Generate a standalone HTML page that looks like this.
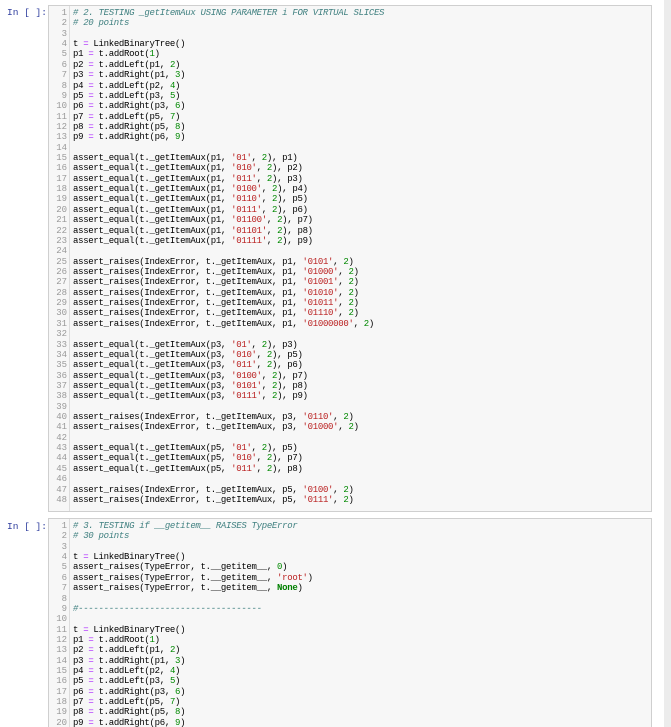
<!DOCTYPE html>
<html style="overflow:hidden"><head><meta charset="utf-8"><style>
html,body{margin:0;overflow:hidden}
body{background:#fff;width:671px;height:727px;position:relative;font-family:"Liberation Mono",monospace}
.sb{position:absolute;left:664px;top:0;width:7px;height:727px;background:#ececec}
.prompt{position:absolute;left:7px;font-size:9.5px;color:#303F9F;font-family:"Liberation Mono",monospace}
.cell{position:absolute;left:48px;width:602px;background:#f7f7f7;border:1px solid #cfcfcf;overflow:hidden}
.gut{position:absolute;left:0;top:0;bottom:0;width:20px;border-right:1px solid #ddd;background:#f7f7f7}
pre{margin:0;font-family:"Liberation Mono",monospace;font-size:9px;letter-spacing:-0.3px;line-height:10.36px;color:#000;position:absolute;top:2px}
.ln{left:0;width:18px;text-align:right;color:#999;letter-spacing:0}
.code{left:24px}
.c{color:#408080;font-style:italic}.n{color:#080}.s{color:#BA2121}.o{color:#A2F}.k{color:#008000;font-weight:bold}
</style></head><body>
<div class="sb"></div>
<div class="prompt" style="top:7px">In [ ]:</div>
<div class="cell" style="top:5px;height:505px"><div class="gut"></div>
<pre class="ln">1
2
3
4
5
6
7
8
9
10
11
12
13
14
15
16
17
18
19
20
21
22
23
24
25
26
27
28
29
30
31
32
33
34
35
36
37
38
39
40
41
42
43
44
45
46
47
48</pre>
<pre class="code"><span class="c"># 2. TESTING _getItemAux USING PARAMETER i FOR VIRTUAL SLICES</span>
<span class="c"># 20 points</span>

t <span class="o">=</span> LinkedBinaryTree()
p1 <span class="o">=</span> t.addRoot(<span class="n">1</span>)
p2 <span class="o">=</span> t.addLeft(p1, <span class="n">2</span>)
p3 <span class="o">=</span> t.addRight(p1, <span class="n">3</span>)
p4 <span class="o">=</span> t.addLeft(p2, <span class="n">4</span>)
p5 <span class="o">=</span> t.addLeft(p3, <span class="n">5</span>)
p6 <span class="o">=</span> t.addRight(p3, <span class="n">6</span>)
p7 <span class="o">=</span> t.addLeft(p5, <span class="n">7</span>)
p8 <span class="o">=</span> t.addRight(p5, <span class="n">8</span>)
p9 <span class="o">=</span> t.addRight(p6, <span class="n">9</span>)

assert_equal(t._getItemAux(p1, <span class="s">'01'</span>, <span class="n">2</span>), p1)
assert_equal(t._getItemAux(p1, <span class="s">'010'</span>, <span class="n">2</span>), p2)
assert_equal(t._getItemAux(p1, <span class="s">'011'</span>, <span class="n">2</span>), p3)
assert_equal(t._getItemAux(p1, <span class="s">'0100'</span>, <span class="n">2</span>), p4)
assert_equal(t._getItemAux(p1, <span class="s">'0110'</span>, <span class="n">2</span>), p5)
assert_equal(t._getItemAux(p1, <span class="s">'0111'</span>, <span class="n">2</span>), p6)
assert_equal(t._getItemAux(p1, <span class="s">'01100'</span>, <span class="n">2</span>), p7)
assert_equal(t._getItemAux(p1, <span class="s">'01101'</span>, <span class="n">2</span>), p8)
assert_equal(t._getItemAux(p1, <span class="s">'01111'</span>, <span class="n">2</span>), p9)

assert_raises(IndexError, t._getItemAux, p1, <span class="s">'0101'</span>, <span class="n">2</span>)
assert_raises(IndexError, t._getItemAux, p1, <span class="s">'01000'</span>, <span class="n">2</span>)
assert_raises(IndexError, t._getItemAux, p1, <span class="s">'01001'</span>, <span class="n">2</span>)
assert_raises(IndexError, t._getItemAux, p1, <span class="s">'01010'</span>, <span class="n">2</span>)
assert_raises(IndexError, t._getItemAux, p1, <span class="s">'01011'</span>, <span class="n">2</span>)
assert_raises(IndexError, t._getItemAux, p1, <span class="s">'01110'</span>, <span class="n">2</span>)
assert_raises(IndexError, t._getItemAux, p1, <span class="s">'01000000'</span>, <span class="n">2</span>)

assert_equal(t._getItemAux(p3, <span class="s">'01'</span>, <span class="n">2</span>), p3)
assert_equal(t._getItemAux(p3, <span class="s">'010'</span>, <span class="n">2</span>), p5)
assert_equal(t._getItemAux(p3, <span class="s">'011'</span>, <span class="n">2</span>), p6)
assert_equal(t._getItemAux(p3, <span class="s">'0100'</span>, <span class="n">2</span>), p7)
assert_equal(t._getItemAux(p3, <span class="s">'0101'</span>, <span class="n">2</span>), p8)
assert_equal(t._getItemAux(p3, <span class="s">'0111'</span>, <span class="n">2</span>), p9)

assert_raises(IndexError, t._getItemAux, p3, <span class="s">'0110'</span>, <span class="n">2</span>)
assert_raises(IndexError, t._getItemAux, p3, <span class="s">'01000'</span>, <span class="n">2</span>)

assert_equal(t._getItemAux(p5, <span class="s">'01'</span>, <span class="n">2</span>), p5)
assert_equal(t._getItemAux(p5, <span class="s">'010'</span>, <span class="n">2</span>), p7)
assert_equal(t._getItemAux(p5, <span class="s">'011'</span>, <span class="n">2</span>), p8)

assert_raises(IndexError, t._getItemAux, p5, <span class="s">'0100'</span>, <span class="n">2</span>)
assert_raises(IndexError, t._getItemAux, p5, <span class="s">'0111'</span>, <span class="n">2</span>)</pre>
</div>
<div class="prompt" style="top:521px">In [ ]:</div>
<div class="cell" style="top:518px;height:215px"><div class="gut"></div>
<pre class="ln">1
2
3
4
5
6
7
8
9
10
11
12
13
14
15
16
17
18
19
20
21</pre>
<pre class="code"><span class="c"># 3. TESTING if __getitem__ RAISES TypeError</span>
<span class="c"># 30 points</span>

t <span class="o">=</span> LinkedBinaryTree()
assert_raises(TypeError, t.__getitem__, <span class="n">0</span>)
assert_raises(TypeError, t.__getitem__, <span class="s">'root'</span>)
assert_raises(TypeError, t.__getitem__, <span class="k">None</span>)

<span class="c">#------------------------------------</span>

t <span class="o">=</span> LinkedBinaryTree()
p1 <span class="o">=</span> t.addRoot(<span class="n">1</span>)
p2 <span class="o">=</span> t.addLeft(p1, <span class="n">2</span>)
p3 <span class="o">=</span> t.addRight(p1, <span class="n">3</span>)
p4 <span class="o">=</span> t.addLeft(p2, <span class="n">4</span>)
p5 <span class="o">=</span> t.addLeft(p3, <span class="n">5</span>)
p6 <span class="o">=</span> t.addRight(p3, <span class="n">6</span>)
p7 <span class="o">=</span> t.addLeft(p5, <span class="n">7</span>)
p8 <span class="o">=</span> t.addRight(p5, <span class="n">8</span>)
p9 <span class="o">=</span> t.addRight(p6, <span class="n">9</span>)
</pre>
</div>
</body></html>
